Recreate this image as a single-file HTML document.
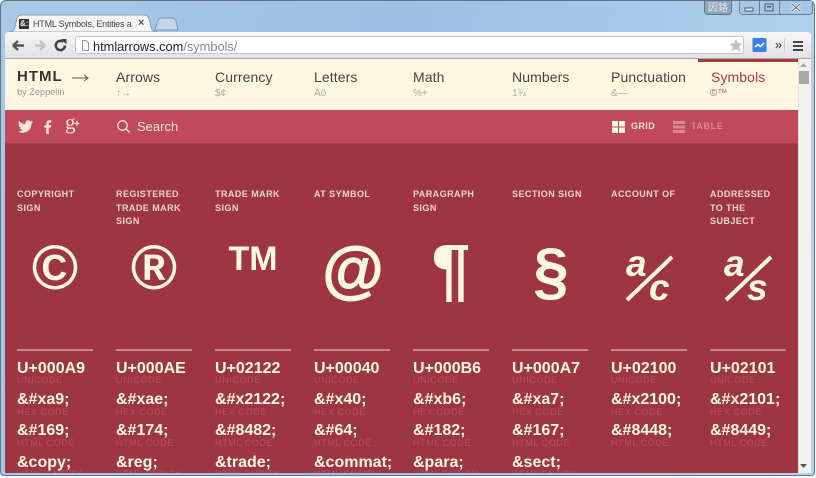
<!DOCTYPE html>
<html><head><meta charset="utf-8"><style>
*{margin:0;padding:0;box-sizing:border-box}
html,body{width:816px;height:478px;overflow:hidden;background:#fff}
body{font-family:"Liberation Sans",sans-serif;position:relative}
.a{position:absolute;white-space:nowrap}
.frame{left:0;top:0;width:815px;height:476px;background:linear-gradient(100deg,#a9c8e6 0%,#9cc0e4 45%,#a6c9ea 70%,#b5d3ee 100%);border:1px solid #5f7488;border-radius:6px 6px 4px 4px}
.toolbar{left:5px;top:32px;width:806px;height:27px;background:linear-gradient(#f6f6f6,#e2e2e2);border-bottom:1px solid #a6a6a6;border-radius:3px 3px 0 0}
.nav{left:5px;top:59px;width:793px;height:51px;background:#fff8e1}
.bar{left:5px;top:110px;width:793px;height:33px;background:#c04a5a}
.main{left:5px;top:143px;width:793px;height:330px;background:#9e3642;border-top:1px solid #a9404d;overflow:hidden}
.in{position:absolute;left:0;top:-1px;width:793px;height:331px}
.nt{top:69px;font-size:14px;letter-spacing:.1px;color:#444}
.ns{top:88px;font-size:10px;color:#aaa}
.t{font-size:9px;font-weight:bold;letter-spacing:.45px;line-height:13.7px;color:#f3d6c8;white-space:normal;width:76px;top:45px}
.s{font-weight:bold;color:#fff8e1;line-height:1;text-align:center;width:76px}
.l{top:206px;width:76px;height:2px;background:#c38a8a}
.v{font-size:16px;font-weight:bold;color:#fff8e1;line-height:18px}
.k{font-size:9px;color:#b4505e;letter-spacing:.6px;line-height:12px}
</style></head><body>
<div class="a frame"></div>
<div class="a" style="left:4px;top:472px;width:808px;height:1px;background:#dce8f3"></div>

<!-- tabs -->
<svg class="a" style="left:0;top:0" width="816" height="60">
<path d="M155 30 L158 20 Q159 18 162 18 L172 18 Q175 18 176 21 L178 30 Z" fill="#c5d6e6" stroke="#7d99b3"/>
<path d="M8 32 Q14 32 15 27 L17 18 Q18 15 22 15 L144 15 Q148 15 149 19 L151 27 Q152 32 158 32 Z" fill="#f5f5f5" stroke="#8ca3b8"/>
<rect x="19" y="19" width="10" height="10" fill="#333"/>
</svg>
<div class="a" style="left:20px;top:19px;width:10px;height:10px;font-size:8px;font-weight:bold;color:#eee;line-height:10px">&amp;:</div>
<div class="a" style="left:33px;top:18px;width:100px;overflow:hidden;font-size:9px;letter-spacing:-.2px;color:#444;line-height:12px">HTML Symbols, Entities a</div>
<div class="a" style="left:138px;top:17px;font-size:11px;font-weight:bold;color:#555">×</div>

<!-- window controls -->
<div class="a" style="left:704px;top:1px;width:28px;height:14px;background:#8ea5ba;border:1px solid #5e7488;border-top:0;border-radius:0 0 4px 4px"></div>
<div class="a" style="left:708px;top:1px;font-size:10px;line-height:12px;color:#e8e8e8;font-family:'Noto Sans CJK TC',sans-serif">因鉻</div>
<div class="a" style="left:739px;top:1px;width:74px;height:14px;background:#a8c6e4;border:1px solid #667e94;border-top:0;border-radius:0 0 4px 4px"></div>
<div class="a" style="left:759px;top:1px;width:1px;height:13px;background:#667e94"></div>
<div class="a" style="left:779px;top:1px;width:1px;height:13px;background:#667e94"></div>
<svg class="a" style="left:739px;top:1px" width="74" height="14">
<rect x="6" y="7" width="8" height="3" fill="#e8eef4" stroke="#4d5d6c"/>
<rect x="26" y="3" width="8" height="7" fill="none" stroke="#4d5d6c" stroke-width="1"/><rect x="28" y="5" width="4" height="1.5" fill="#4d5d6c"/>
<path d="M53 3 L61 10 M61 3 L53 10" stroke="#e8eef4" stroke-width="3"/><path d="M53 3 L61 10 M61 3 L53 10" stroke="#5a6a78" stroke-width="1"/>
</svg>

<!-- toolbar -->
<div class="a toolbar"></div>
<svg class="a" style="left:5px;top:33px" width="806" height="26">
<path d="M8 12.5 H19 M8 12.5 L13 8 M8 12.5 L13 17" stroke="#555" stroke-width="2.4" fill="none"/>
<path d="M30 12.5 H40 M40 12.5 L35 8 M40 12.5 L35 17" stroke="#c2c2c2" stroke-width="2.4" fill="none"/>
<path d="M60 12.5 A4.6 4.6 0 1 1 58.3 8.9" stroke="#444" stroke-width="2.5" fill="none"/><path d="M56 6 L61.5 6 L61.5 11.5 Z" fill="#444"/>
<rect x="70.5" y="3.5" width="668" height="17" rx="2" fill="#fff" stroke="#c6c6c6"/>
<path d="M77.5 7.5 H81 L83.500 10 V17.5 H77.5 Z" fill="#fff" stroke="#999"/>
<path d="M731 7 l2 4.2 4.6.5 -3.4 3.1 .9 4.6 -4.100-2.3 -4.100 2.3 .9-4.600 -3.400-3.100 4.600-.5z" fill="#c4c4c4" transform="translate(0,-1)"/>
<rect x="747.5" y="5" width="14" height="14" rx="1" fill="#3a7fe6"/>
<path d="M750 14 L753 11.5 L755.5 13.5 L759 10" stroke="#fff" stroke-width="1.6" fill="none"/>
<path d="M771 10 l2 2.5 -2 2.5 M774 10 l2 2.5 -2 2.5" stroke="#555" stroke-width="1.2" fill="none"/>
<rect x="779" y="6" width="1" height="13" fill="#ccc"/>
<rect x="788" y="8" width="10" height="2" fill="#444"/><rect x="788" y="12" width="10" height="2" fill="#444"/><rect x="788" y="16" width="10" height="2" fill="#444"/>
</svg>
<div class="a" style="left:93px;top:38px;font-size:12.8px;line-height:17px;color:#222">htmlarrows.com<span style="color:#888">/symbols/</span></div>

<!-- nav -->
<div class="a nav"></div>
<div class="a" style="left:698px;top:59px;width:100px;height:3px;background:#a83a44"></div>
<div class="a" style="left:17px;top:68px;font-size:15px;font-weight:bold;letter-spacing:1px;color:#333">HTML</div>
<svg class="a" style="left:71px;top:72px" width="20" height="12"><path d="M1 6 H17 M13 3 L17 6 L13 9" stroke="#555" stroke-width="1" fill="none"/></svg>
<div class="a" style="left:17px;top:87px;font-size:9.2px;color:#999">by Zeppelin</div>
<div class="a nt" style="left:116px">Arrows</div><div class="a ns" style="left:116px">↑→</div>
<div class="a nt" style="left:215px">Currency</div><div class="a ns" style="left:215px">$¢</div>
<div class="a nt" style="left:314px">Letters</div><div class="a ns" style="left:314px">Aö</div>
<div class="a nt" style="left:413px">Math</div><div class="a ns" style="left:413px">%+</div>
<div class="a nt" style="left:512px">Numbers</div><div class="a ns" style="left:512px">1¾</div>
<div class="a nt" style="left:611px">Punctuation</div><div class="a ns" style="left:611px">&amp;—</div>
<div class="a nt" style="left:711px;color:#a83a44">Symbols</div><div class="a ns" style="left:710px;color:#b5606a">©™</div>

<!-- scrollbar -->
<div class="a" style="left:798px;top:59px;width:13px;height:414px;background:#f1f1f1;border-left:1px solid #e4e4e4"></div>
<div class="a" style="left:799px;top:71px;width:10px;height:13px;background:#a8a8a8"></div>
<svg class="a" style="left:799px;top:62px" width="11" height="6"><path d="M1 5 H8 L4.5 1 Z" fill="#aaa"/></svg>
<svg class="a" style="left:799px;top:463px" width="11" height="6"><path d="M1 1 H8 L4.5 5 Z" fill="#555"/></svg>

<!-- bar -->
<div class="a bar"></div>
<svg class="a" style="left:18px;top:120px" width="15" height="13" viewBox="0 0 24 20"><path fill="#fbe6d6" d="M24 2.4c-.9.4-1.8.7-2.8.8 1-.6 1.800-1.600 2.200-2.700-1 .6-2 1-3.100 1.200A4.900 4.900 0 0 0 11.900 6.200C7.800 6 4.200 4 1.700.9.300 3.200 1 6.100 3.200 7.500c-.8 0-1.500-.2-2.200-.6 0 2.300 1.600 4.400 3.900 4.900-.7.200-1.500.2-2.200.1.600 2 2.500 3.400 4.600 3.400A9.900 9.900 0 0 1 0 17.800 14 14 0 0 0 7.500 20c9.100 0 14.300-7.700 14-14.600 1-.7 1.800-1.600 2.500-3z"/></svg>
<svg class="a" style="left:44px;top:120px" width="8" height="14" viewBox="0 0 8 14"><path fill="#fbe6d6" d="M2.300 14V7.600H.3V5.200h2V3.500C2.300 1.400 3.500.3 5.400.3c.9 0 1.700.1 1.900.1v2.200H6c-1 0-1.200.5-1.200 1.200v1.400h2.400l-.3 2.400H4.800V14z"/></svg>
<div class="a" style="left:65px;top:111px;font-family:'Liberation Serif',serif;font-size:21px;line-height:22px;color:#fbe6d6">g</div>
<div class="a" style="left:74px;top:119px;font-size:10px;line-height:12px;font-weight:bold;color:#fbe6d6">+</div>
<svg class="a" style="left:116px;top:119px" width="15" height="15"><circle cx="6.500" cy="6.500" r="4.700" fill="none" stroke="#fbe6d6" stroke-width="1.300"/><path d="M10 10 L13.500 13.500" stroke="#fbe6d6" stroke-width="1.500"/></svg>
<div class="a" style="left:137px;top:119px;font-size:13px;line-height:16px;color:#fbe6d6">Search</div>
<svg class="a" style="left:612px;top:121px" width="13" height="12"><rect width="6" height="5.500" fill="#fff8e1"/><rect x="7" width="6" height="5.500" fill="#fff8e1"/><rect y="6.500" width="6" height="5.500" fill="#fff8e1"/><rect x="7" y="6.500" width="6" height="5.500" fill="#fff8e1"/></svg>
<div class="a" style="left:631px;top:120px;font-size:9px;line-height:12px;font-weight:bold;letter-spacing:.4px;color:#fbe6d6">GRID</div>
<svg class="a" style="left:673px;top:121px" width="12" height="12"><rect width="12" height="3" fill="#d98a90"/><rect y="4.500" width="12" height="3" fill="#d98a90"/><rect y="9" width="12" height="3" fill="#d98a90"/></svg>
<div class="a" style="left:691px;top:120px;font-size:9px;line-height:12px;font-weight:bold;letter-spacing:.6px;color:#d98a90">TABLE</div>

<!-- main -->
<div class="a main"><div class="in">
<div class="a t" style="left:12px">COPYRIGHT SIGN</div>
<div class="a t" style="left:111px">REGISTERED TRADE MARK SIGN</div>
<div class="a t" style="left:210px">TRADE MARK SIGN</div>
<div class="a t" style="left:309px">AT SYMBOL</div>
<div class="a t" style="left:408px">PARAGRAPH SIGN</div>
<div class="a t" style="left:507px;width:80px">SECTION SIGN</div>
<div class="a t" style="left:606px;width:80px">ACCOUNT OF</div>
<div class="a t" style="left:705px;width:70px">ADDRESSED TO THE SUBJECT</div>

<div class="a s" style="left:12px;top:94px;font-size:63px">©</div>
<div class="a s" style="left:111px;top:94px;font-size:63px">®</div>
<div class="a s" style="left:210px;top:99px;font-size:34px">TM</div>
<div class="a s" style="left:309px;top:97px;font-size:63px;font-style:italic;-webkit-text-stroke:1px #fff8e1">@</div>
<div class="a s" style="left:408px;top:91px;font-size:70px">¶</div>
<div class="a s" style="left:508px;top:96px;font-size:64px">§</div>

<div class="a" style="left:621px;top:101px;font:italic bold 37px/40px 'Liberation Sans',sans-serif;color:#fff8e1">a</div>
<div class="a" style="left:644px;top:125px;font:italic bold 37px/40px 'Liberation Sans',sans-serif;color:#fff8e1">c</div>
<svg class="a" style="left:620px;top:110px" width="50" height="60"><path d="M2 47 L47 4" stroke="#fff8e1" stroke-width="4" fill="none"/></svg>
<div class="a" style="left:719px;top:101px;font:italic bold 37px/40px 'Liberation Sans',sans-serif;color:#fff8e1">a</div>
<div class="a" style="left:742px;top:125px;font:italic bold 37px/40px 'Liberation Sans',sans-serif;color:#fff8e1">s</div>
<svg class="a" style="left:719px;top:110px" width="50" height="60"><path d="M2 47 L47 4" stroke="#fff8e1" stroke-width="4" fill="none"/></svg>

<div class="a l" style="left:12px"></div><div class="a l" style="left:111px"></div><div class="a l" style="left:210px"></div><div class="a l" style="left:309px"></div><div class="a l" style="left:408px"></div><div class="a l" style="left:507px"></div><div class="a l" style="left:606px"></div><div class="a l" style="left:705px"></div>

<div class="a v" style="left:12px;top:217px">U+000A9</div><div class="a k" style="left:12px;top:231px">UNICODE</div>
<div class="a v" style="left:12px;top:248px">&amp;#xa9;</div><div class="a k" style="left:12px;top:263px">HEX CODE</div>
<div class="a v" style="left:12px;top:279px">&amp;#169;</div><div class="a k" style="left:12px;top:294px">HTML CODE</div>
<div class="a v" style="left:12px;top:311px">&amp;copy;</div><div class="a k" style="left:12px;top:325px">HTML ENTITY</div>

<div class="a v" style="left:111px;top:217px">U+000AE</div><div class="a k" style="left:111px;top:231px">UNICODE</div>
<div class="a v" style="left:111px;top:248px">&amp;#xae;</div><div class="a k" style="left:111px;top:263px">HEX CODE</div>
<div class="a v" style="left:111px;top:279px">&amp;#174;</div><div class="a k" style="left:111px;top:294px">HTML CODE</div>
<div class="a v" style="left:111px;top:311px">&amp;reg;</div><div class="a k" style="left:111px;top:325px">HTML ENTITY</div>

<div class="a v" style="left:210px;top:217px">U+02122</div><div class="a k" style="left:210px;top:231px">UNICODE</div>
<div class="a v" style="left:210px;top:248px">&amp;#x2122;</div><div class="a k" style="left:210px;top:263px">HEX CODE</div>
<div class="a v" style="left:210px;top:279px">&amp;#8482;</div><div class="a k" style="left:210px;top:294px">HTML CODE</div>
<div class="a v" style="left:210px;top:311px">&amp;trade;</div><div class="a k" style="left:210px;top:325px">HTML ENTITY</div>

<div class="a v" style="left:309px;top:217px">U+00040</div><div class="a k" style="left:309px;top:231px">UNICODE</div>
<div class="a v" style="left:309px;top:248px">&amp;#x40;</div><div class="a k" style="left:309px;top:263px">HEX CODE</div>
<div class="a v" style="left:309px;top:279px">&amp;#64;</div><div class="a k" style="left:309px;top:294px">HTML CODE</div>
<div class="a v" style="left:309px;top:311px">&amp;commat;</div><div class="a k" style="left:309px;top:325px">HTML ENTITY</div>

<div class="a v" style="left:408px;top:217px">U+000B6</div><div class="a k" style="left:408px;top:231px">UNICODE</div>
<div class="a v" style="left:408px;top:248px">&amp;#xb6;</div><div class="a k" style="left:408px;top:263px">HEX CODE</div>
<div class="a v" style="left:408px;top:279px">&amp;#182;</div><div class="a k" style="left:408px;top:294px">HTML CODE</div>
<div class="a v" style="left:408px;top:311px">&amp;para;</div><div class="a k" style="left:408px;top:325px">HTML ENTITY</div>

<div class="a v" style="left:507px;top:217px">U+000A7</div><div class="a k" style="left:507px;top:231px">UNICODE</div>
<div class="a v" style="left:507px;top:248px">&amp;#xa7;</div><div class="a k" style="left:507px;top:263px">HEX CODE</div>
<div class="a v" style="left:507px;top:279px">&amp;#167;</div><div class="a k" style="left:507px;top:294px">HTML CODE</div>
<div class="a v" style="left:507px;top:311px">&amp;sect;</div><div class="a k" style="left:507px;top:325px">HTML ENTITY</div>

<div class="a v" style="left:606px;top:217px">U+02100</div><div class="a k" style="left:606px;top:231px">UNICODE</div>
<div class="a v" style="left:606px;top:248px">&amp;#x2100;</div><div class="a k" style="left:606px;top:263px">HEX CODE</div>
<div class="a v" style="left:606px;top:279px">&amp;#8448;</div><div class="a k" style="left:606px;top:294px">HTML CODE</div>

<div class="a v" style="left:705px;top:217px">U+02101</div><div class="a k" style="left:705px;top:231px">UNICODE</div>
<div class="a v" style="left:705px;top:248px">&amp;#x2101;</div><div class="a k" style="left:705px;top:263px">HEX CODE</div>
<div class="a v" style="left:705px;top:279px">&amp;#8449;</div><div class="a k" style="left:705px;top:294px">HTML CODE</div>
</div></div>
</body></html>
